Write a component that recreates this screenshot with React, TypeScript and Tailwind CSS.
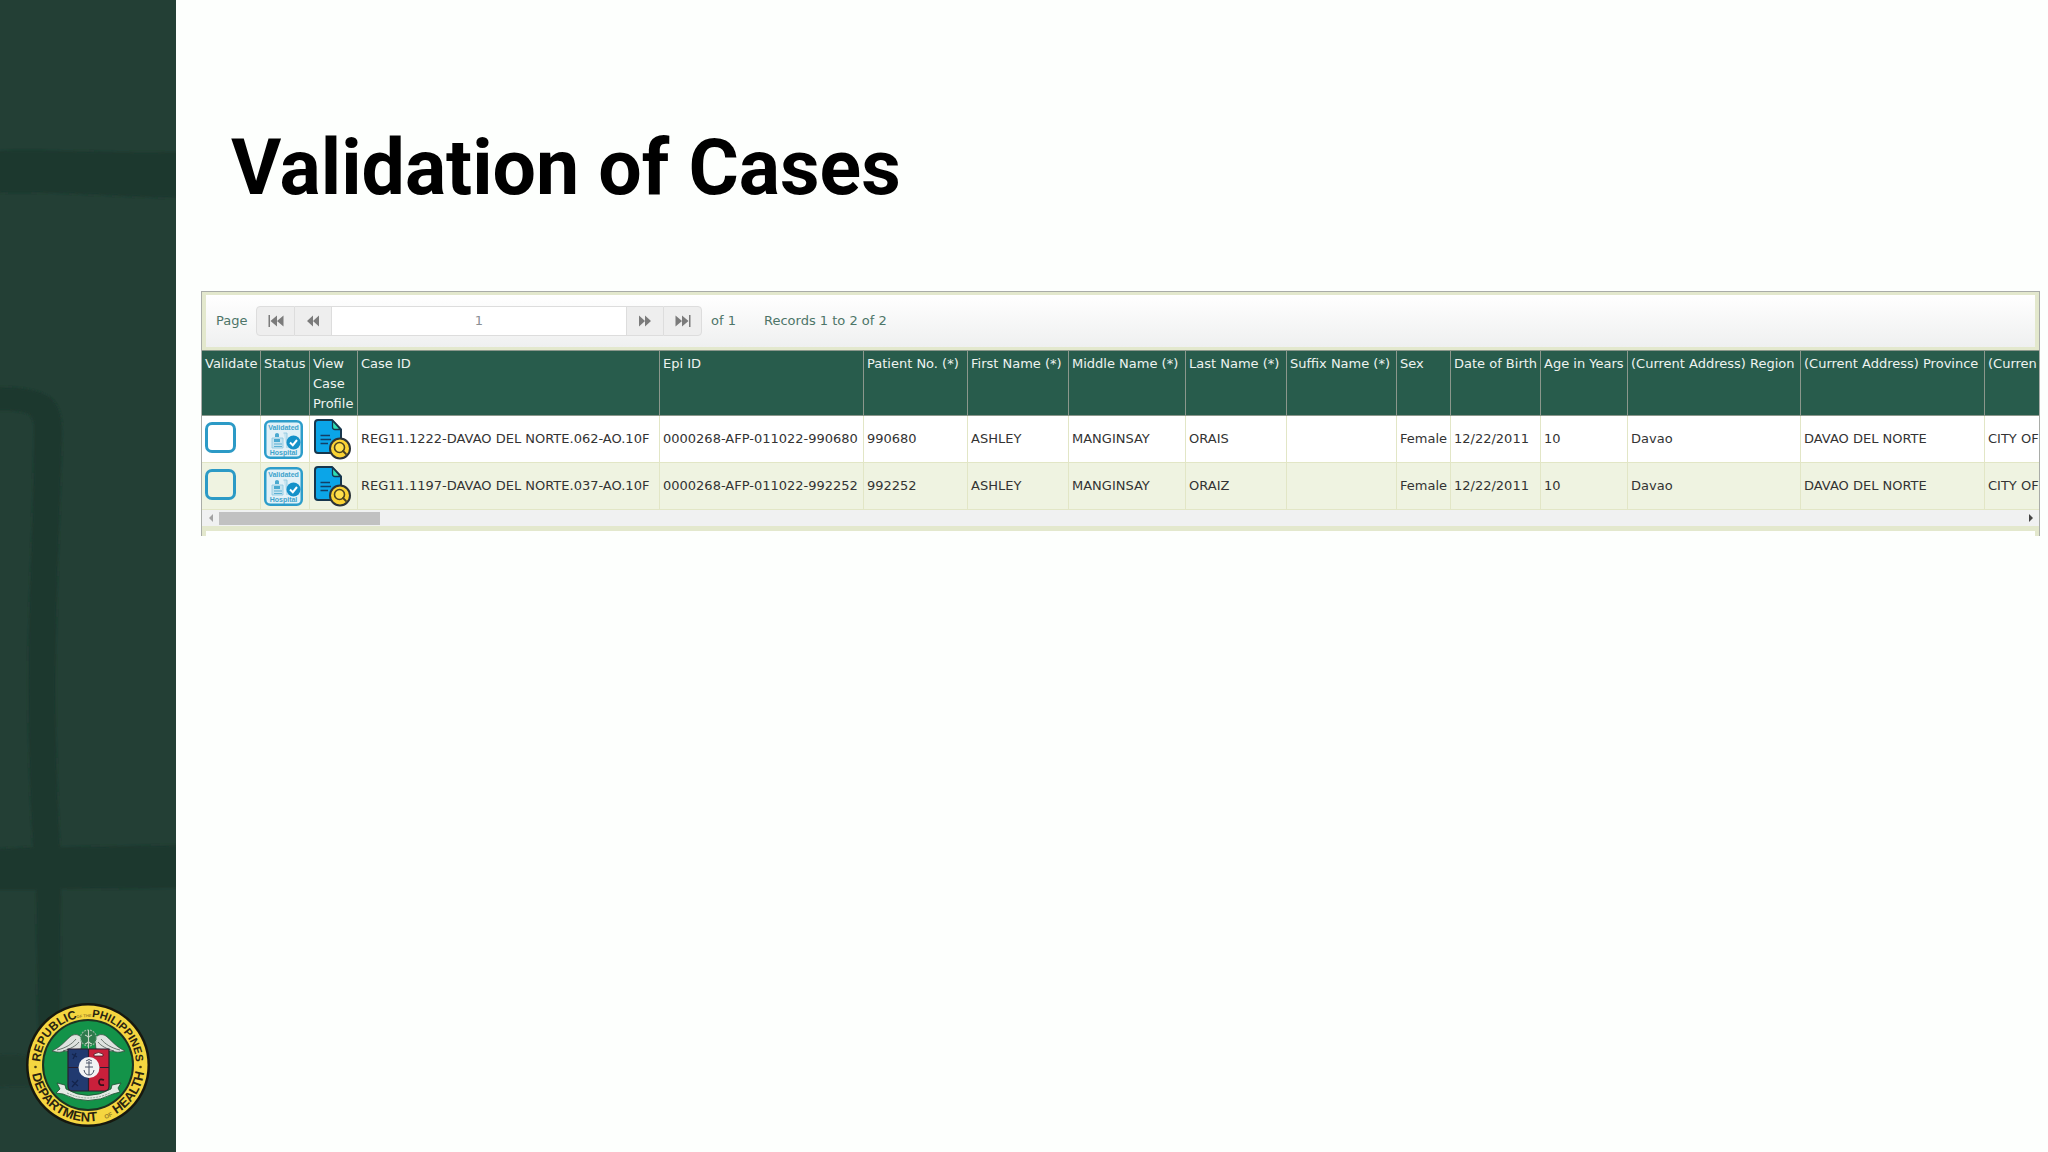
import React from "react";

type Column = { label: string; width: string };

type CaseRow = { id: string; values: string[] };

const columns: Column[] = [
  { label: "Validate", width: "w-[59px]" },
  { label: "Status", width: "w-[49px]" },
  { label: "View Case Profile", width: "w-[48px]" },
  { label: "Case ID", width: "w-[302px]" },
  { label: "Epi ID", width: "w-[204px]" },
  { label: "Patient No. (*)", width: "w-[104px]" },
  { label: "First Name (*)", width: "w-[101px]" },
  { label: "Middle Name (*)", width: "w-[117px]" },
  { label: "Last Name (*)", width: "w-[101px]" },
  { label: "Suffix Name (*)", width: "w-[110px]" },
  { label: "Sex", width: "w-[54px]" },
  { label: "Date of Birth", width: "w-[90px]" },
  { label: "Age in Years", width: "w-[87px]" },
  { label: "(Current Address) Region", width: "w-[173px]" },
  { label: "(Current Address) Province", width: "w-[184px]" },
  { label: "(Curren", width: "w-auto" },
];

const rows: CaseRow[] = [
  {
    id: "REG11.1222-DAVAO DEL NORTE.062-AO.10F",
    values: ["0000268-AFP-011022-990680", "990680", "ASHLEY", "MANGINSAY", "ORAIS", "", "Female", "12/22/2011", "10", "Davao", "DAVAO DEL NORTE", "CITY OF"],
  },
  {
    id: "REG11.1197-DAVAO DEL NORTE.037-AO.10F",
    values: ["0000268-AFP-011022-992252", "992252", "ASHLEY", "MANGINSAY", "ORAIZ", "", "Female", "12/22/2011", "10", "Davao", "DAVAO DEL NORTE", "CITY OF"],
  },
];

function SidebarPattern() {
  return (
    <svg className="absolute inset-0 h-full w-full" viewBox="0 0 176 1152" preserveAspectRatio="none" aria-hidden="true">
      <defs>
        <filter id="soft" x="-10%" y="-10%" width="120%" height="120%">
          <feGaussianBlur stdDeviation="1.2" />
        </filter>
      </defs>
      <g fill="#1d382e" filter="url(#soft)">
        <path d="M-6 151C50 149 100 153 182 152V198C110 197 60 191 -6 193Z" />
        <path d="M-6 387C20 387 36 389 48 396C60 404 63 418 62 440C60 510 57 570 56 650C55 730 57 790 60 847L182 845V888L61 889L60 1030L38 1030L36 890L-6 890V849L33 847C29 780 27 700 29 620C31 550 34 490 34 425C33 413 27 410 -6 411Z" />
        <path d="M-6 1056C10 1053 24 1055 40 1060V1084C24 1088 10 1084 -6 1088Z" opacity="0.6" />
      </g>
    </svg>
  );
}

function Seal() {
  return (
    <svg className="relative size-[124px]" viewBox="0 0 124 124" role="img" aria-label="Republic of the Philippines Department of Health">
      <defs>
        <path id="seal-top" d="M14 62A48 48 0 0 1 110 62" />
        <path id="seal-bottom" d="M5.500 62A56.500 56.500 0 0 0 118.500 62" />
      </defs>
      <circle cx="62" cy="62" r="62" fill="#16180f" />
      <circle cx="62" cy="62" r="59.500" fill="#f5d640" />
      <circle cx="62" cy="62" r="46" fill="#1d3320" />
      <circle cx="62" cy="62" r="44" fill="#139349" />
      <g className="font-['Liberation_Sans',sans-serif] font-bold" fill="#2a2410">
        <text fontSize="12"><textPath href="#seal-top" startOffset="3">REPUBLIC</textPath></text>
        <text fontSize="4" fill="#9a7f28"><textPath href="#seal-top" startOffset="64">OF THE</textPath></text>
        <text fontSize="11"><textPath href="#seal-top" startOffset="79">PHILIPPINES</textPath></text>
        <text fontSize="13"><textPath href="#seal-bottom" startOffset="9">DEPARTMENT</textPath></text>
        <text fontSize="6" fill="#9a7f28"><textPath href="#seal-bottom" startOffset="106">OF</textPath></text>
        <text fontSize="13"><textPath href="#seal-bottom" startOffset="118">HEALTH</textPath></text>
      </g>
      <circle cx="9.500" cy="64" r="1.300" fill="#4a3f14" />
      <circle cx="114.500" cy="64" r="1.300" fill="#4a3f14" />
      <g stroke="#33443a" strokeWidth="0.700">
        <path fill="#dfe3e0" d="M26 48C35 44 40 37 45 33C50 30 55 32 56 37L55 46C48 46 43 49 38 48C34 50 30 49 26 48Z" />
        <path fill="#dfe3e0" d="M99 48C90 44 85 37 80 33C75 30 70 32 69 37L70 46C77 46 82 49 87 48C91 50 95 49 99 48Z" />
        <path fill="none" d="M31 47C40 45 46 41 50 36M37 48C44 46 50 43 53 39M94 47C85 45 79 41 75 36M88 48C81 46 75 43 72 39" />
      </g>
      <circle cx="62.500" cy="35" r="8" fill="#2e7a4c" stroke="#8db59a" strokeWidth="1.200" strokeDasharray="2 1" />
      <path d="M62.500 27V46M59 32C67 35 58 38 66 41M66 32C58 35 67 38 59 41" fill="none" stroke="#c5d3c4" strokeWidth="1.100" />
      <path d="M42 46H62.500V88H46Q42 88 42 83Z" fill="#213a70" />
      <path d="M62.500 46H83V83Q83 88 79 88H62.500Z" fill="#c9203b" />
      <path d="M42 46H83V83Q83 88 79 88H46Q42 88 42 83ZM62.500 46V88M42 64.500H83" fill="none" stroke="#2a1d30" strokeWidth="1.200" />
      <path d="M68 51Q72.500 48 77 51V53H68Z" fill="#f1e8e6" stroke="#4c1420" strokeWidth="0.800" />
      <path d="M78 77Q73 75 73 79Q73 83 78 82" fill="none" stroke="#3a101c" strokeWidth="1.800" />
      <path d="M46 78L52 83M52 77L46 84M46 51L51 54M50 50L47 56" stroke="#14254d" strokeWidth="1.300" />
      <circle cx="63" cy="64.500" r="10.500" fill="#f2f3f4" />
      <path d="M63 58V72M60 60H66M58 67Q59 72 63 72Q67 72 68 67M59 64H67M60 58Q63 55 66 58" fill="none" stroke="#4b5568" strokeWidth="1" />
      <path d="M31 80L39 82L40 86Q62 99 85 86L86 82L95 80L92 85L94 89L87 91Q62 104 37 91L30 90L34 86Z" fill="#e4eae4" stroke="#1d4a2e" strokeWidth="0.800" />
      <path d="M41 90Q62 100 84 90" fill="none" stroke="#8fa596" strokeWidth="1" strokeDasharray="2 1" />
    </svg>
  );
}

function StatusIcon() {
  return (
    <svg className="size-[39px]" viewBox="0 0 39 39" role="img" aria-label="Validated Hospital">
      <rect x="1.250" y="1.250" width="36.500" height="36.500" rx="5" fill="#e2f1f7" stroke="#2c9dca" strokeWidth="2.500" />
      <g className="font-['Liberation_Sans',sans-serif] font-bold" fill="#3ea3cc" fontSize="7" textAnchor="middle">
        <text x="19.500" y="10">Validated</text>
        <text x="19.500" y="35">Hospital</text>
      </g>
      <path d="M8 18H19V28H8ZM19.500 13H23V28" fill="#c6e4f0" stroke="#8cc7df" strokeWidth="0.800" />
      <path d="M11 17V14.500Q11 13 13 13Q15 13 15 14.500V17ZM10 19H16V22H10Z" fill="#4ba9d0" />
      <path d="M10 24H18M10 26.500H18" stroke="#5cb1d4" strokeWidth="1" />
      <circle cx="29.500" cy="22.500" r="7" fill="#1491c9" />
      <path d="M26 22.500L28.800 25.200L33 20" fill="none" stroke="#ffffff" strokeWidth="2" />
    </svg>
  );
}

function ProfileIcon() {
  return (
    <svg className="h-[41px] w-[37px]" viewBox="0 0 37 41" aria-hidden="true">
      <path d="M4 1H18L27 10.500V34H4Q1 34 1 31V4Q1 1 4 1Z" fill="#0ba5e8" stroke="#17364d" strokeWidth="2" strokeLinejoin="round" />
      <path d="M18.500 1.500V8Q18.500 10.500 21 10.500H26.500Z" fill="#2fe0b5" stroke="#17364d" strokeWidth="1.300" strokeLinejoin="round" />
      <path d="M6.500 16.500H16M6.500 20.500H17M6.500 24.500H14" stroke="#123f66" strokeWidth="1.400" />
      <circle cx="26" cy="29.500" r="10" fill="#fbd334" stroke="#2c3338" strokeWidth="2" />
      <circle cx="25.500" cy="28.500" r="5" fill="#ffe04e" stroke="#4d4420" strokeWidth="1.600" />
      <path d="M29 32L32 35" stroke="#4d4420" strokeWidth="1.800" strokeLinecap="round" />
    </svg>
  );
}

function PageIcon({ bar, flip }: { bar: boolean; flip: boolean }) {
  return (
    <svg className={flip ? "h-3 w-4 -scale-x-100" : "h-3 w-4"} viewBox="0 0 16 12" fill="#7b7b7b" aria-hidden="true">
      {bar && <rect x="0.500" y="0" width="1.500" height="12" />}
      <path d={bar ? "M9 0.500V11.500L2.500 6ZM15.500 0.500V11.500L9 6Z" : "M8 0.500V11.500L2 6ZM14 0.500V11.500L8 6Z"} />
    </svg>
  );
}

function Pager() {
  const button = "flex items-center justify-center bg-[#eeeeee] border-[#dddddd]";
  return (
    <form className="flex h-[52px] items-center bg-linear-to-b from-white to-[#eff0f0] px-[10px] text-[#4d7568]" onSubmit={(e) => e.preventDefault()}>
      <label htmlFor="page" className="w-10">Page</label>
      <div className="flex h-[30px] w-[446px]">
        <button type="button" aria-label="First page" className={`${button} w-[39px] rounded-l-sm border`}><PageIcon bar flip={false} /></button>
        <button type="button" aria-label="Previous page" className={`${button} w-[37px] border-y border-r`}><PageIcon bar={false} flip={false} /></button>
        <input id="page" defaultValue="1" className="min-w-0 flex-1 border-y border-[#dddddd] bg-white text-center text-[#8a8f94] outline-none" />
        <button type="button" aria-label="Next page" className={`${button} w-[37px] border-y border-l`}><PageIcon bar={false} flip /></button>
        <button type="button" aria-label="Last page" className={`${button} w-[39px] rounded-r-sm border`}><PageIcon bar flip /></button>
      </div>
      <span className="ml-[9px] w-[53px]">of 1</span>
      <span>Records 1 to 2 of 2</span>
    </form>
  );
}

function CaseTable() {
  return (
    <table className="w-full table-fixed border-separate border-spacing-0">
      <thead>
        <tr className="bg-[#285c4c] text-[#eef3f0]">
          {columns.map((c) => (
            <th key={c.label} scope="col" className={`${c.width} overflow-hidden border-y border-r border-[#8b978c] pt-[3px] pr-0 pb-px pl-[3px] text-left align-top font-normal last:border-r-0`}>
              {c.label}
            </th>
          ))}
        </tr>
      </thead>
      <tbody className="[&_td]:overflow-hidden [&_td]:border-r [&_td]:border-b [&_td]:border-[#e2e6c6] [&_td]:py-0 [&_td]:pr-0 [&_td]:pl-[3px] [&_td]:whitespace-nowrap [&_td:last-child]:border-r-0">
        {rows.map((r) => (
          <tr key={r.id} className="h-[47px] bg-white text-[#333333] even:bg-[#eff3e1]">
            <td>
              <input type="checkbox" aria-label={`Validate ${r.id}`} className="mb-1 block size-[31px] appearance-none rounded-[7px] border-3 border-[#2c9ac6] checked:bg-[#2c9ac6]" />
            </td>
            <td><StatusIcon /></td>
            <td>
              <button type="button" aria-label={`View profile of ${r.id}`} className="ml-px block"><ProfileIcon /></button>
            </td>
            <td>{r.id}</td>
            {r.values.map((v, i) => (
              <td key={i}>{v}</td>
            ))}
          </tr>
        ))}
      </tbody>
    </table>
  );
}

function ScrollBar() {
  return (
    <div className="flex h-4 items-center bg-[#f0f1f1]">
      <button type="button" aria-label="Scroll left" className="flex w-[17px] justify-center">
        <svg className="h-2 w-1" viewBox="0 0 4 8" fill="#a3a3a3"><path d="M4 0V8L0 4Z" /></svg>
      </button>
      <div className="h-[13px] w-[161px] bg-[#c1c1c1]" />
      <button type="button" aria-label="Scroll right" className="ml-auto flex w-[17px] justify-center">
        <svg className="h-2 w-1" viewBox="0 0 4 8" fill="#454545"><path d="M0 0V8L4 4Z" /></svg>
      </button>
    </div>
  );
}

function App() {
  return (
    <div className="flex min-h-screen bg-[#fdfffd] font-['DejaVu_Sans',sans-serif] text-[13px] leading-5">
      <aside className="relative flex w-44 shrink-0 flex-col items-center justify-end bg-[#233f35] pb-[25px]">
        <SidebarPattern />
        <Seal />
      </aside>
      <main className="min-w-0 flex-1 pr-2 pl-[25px]">
        <h1 className="pt-[123px] pl-[30px] font-['Roboto',sans-serif] text-[77px] leading-[90px] font-bold text-black">Validation of Cases</h1>
        <section aria-label="Cases" className="mt-[78px] overflow-hidden border-x border-t border-[#a9aca8]">
          <div className="border-x-4 border-y-[3px] border-[#e3e8cd]">
            <Pager />
          </div>
          <CaseTable />
          <ScrollBar />
          <div className="h-[10px] border-x-4 border-t-5 border-[#e3e8cd]" />
        </section>
      </main>
    </div>
  );
}

export default App;
